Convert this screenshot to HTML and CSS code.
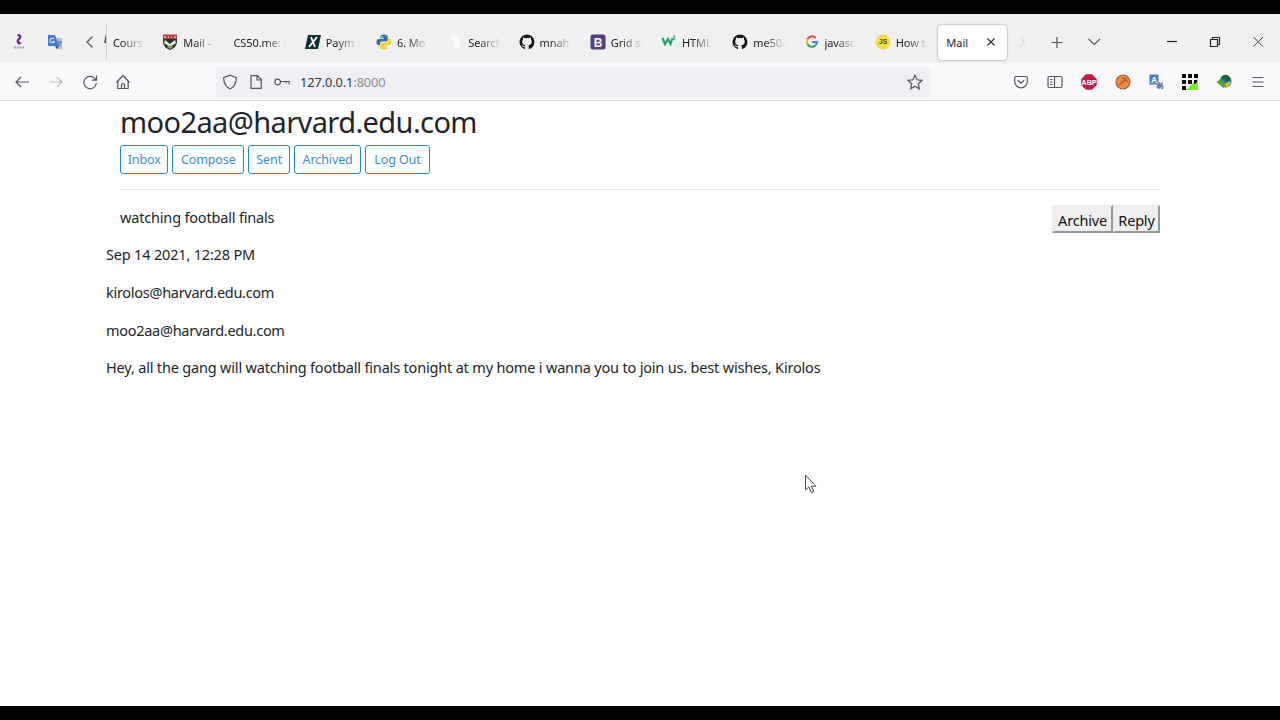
FILE: index.html
```html
<!DOCTYPE html>
<html lang="en">
<head>
  <meta charset="UTF-8" />
  <title>Mail</title>
  <link rel="stylesheet" href="styles.css">
</head>
<body>
  <div class="tabbar">
    <div class="pinned">
      <svg width="16" height="16" viewBox="0 0 16 16"><path d="M6.500 1.500c3-1 3.500 1.500 1.500 3.500-2 2-2 3.500 1 4" fill="none" stroke="#642b82" stroke-width="2.200"/><path d="M7 9.500q2 1 3-1" fill="none" stroke="#642b82" stroke-width="1.500"/><path d="M3 13.500h10" stroke="#aaa1b1" stroke-width="2" stroke-dasharray="2 .7"/></svg>
      <svg width="16" height="16" viewBox="0 0 16 16"><path d="M6 4h9v11H9z" fill="#b5c0d4"/><path d="M1 1h7l4 11H2q-1 0-1-1z" fill="#427bd4"/><path d="M8 12h4l-2 3z" fill="#3159b5"/><path d="M7 5a2.3 2.3 0 1 0 .3 2.500H5.500" fill="none" stroke="#e4efff" stroke-width="1.100"/><path d="M10 8h5M12 7v1M14 8q-1 3-3 4m0-3 3 3" stroke="#5b7297" fill="none"/></svg>
      <svg width="16" height="16" viewBox="0 0 16 16"><path d="M10.500 2.500 5 8l5.500 5.500" fill="none" stroke="#55555c" stroke-width="1.200"/></svg>
      <svg class="sliver" width="3" height="16" viewBox="0 0 3 16"><path d="M2.500 1 1 9" stroke="#333" stroke-width="1.500"/></svg>
    </div>
    <div class="tabs">
      <div class="tab first"><span class="title">Cours</span></div>
      <div class="tab">
        <svg width="16" height="16" viewBox="0 0 16 16"><path d="M1 1h14v7q0 5-7 8-7-3-7-8z" fill="#28382f"/><path d="M1 .5h14V5H1z" fill="#ad3d43"/><path d="M2 3h2m2 0h1m2 0h1m2 0h2" stroke="#ecc6af" stroke-width="1.500"/><path d="m3 6 5 4 5-4 1 3-6 4-6-4z" fill="#e9eee4"/><path d="m5 13 3-2 3 2-3 2z" fill="#7cac50"/></svg>
        <span class="title">Mail -</span>
      </div>
      <div class="tab"><span class="title">CS50.me: C</span></div>
      <div class="tab">
        <svg width="16" height="16" viewBox="0 0 16 16"><path d="M3 1h13l-3 14H0z" fill="#102d31"/><path d="m6 3 4 10M12 3l-8 10" stroke="#fff" stroke-width="1.900"/></svg>
        <span class="title">Paym</span>
      </div>
      <div class="tab">
        <svg width="16" height="16" viewBox="0 0 16 16"><path d="M8 .5c-3 0-3.700 1-3.700 2.300v1.500H8v.7H3C1 5 .5 6.500.5 8s.7 3.200 2 3.200H4V9.500C4 8 5 7.500 6 7.500h4c1.200 0 1.800-1 1.800-2V3C11.800 1.200 10 .5 8 .5z" fill="#3b719f"/><path d="M8 15.500c3 0 3.700-1 3.700-2.300v-1.500H8V11h5c2 0 2.500-1.500 2.500-3s-.7-3.200-2-3.200H12v1.700c0 1.500-1 2-2 2H6c-1.200 0-1.800 1-1.800 2V13c0 1.800 1.800 2.500 3.800 2.500z" fill="#f4d13f"/><circle cx="6" cy="2.700" r=".8" fill="#fff"/><circle cx="10" cy="13.300" r=".8" fill="#fff"/></svg>
        <span class="title">6. Mo</span>
      </div>
      <div class="tab">
        <svg width="16" height="16" viewBox="0 0 16 16"><path d="M4 1h7v3h2v10H7V6H4z" fill="#fbfaf5"/></svg>
        <span class="title">Search</span>
      </div>
      <div class="tab">
        <svg width="16" height="16" viewBox="0 0 16 16"><use href="#github"/></svg>
        <span class="title">mnah</span>
      </div>
      <div class="tab">
        <svg width="16" height="16" viewBox="0 0 16 16"><rect x=".5" y=".5" width="15" height="15" rx="2.500" fill="#563d7c"/><text class="mark bold" x="8" y="12.500" font-size="12">B</text></svg>
        <span class="title">Grid sy</span>
      </div>
      <div class="tab">
        <svg width="16" height="16" viewBox="0 0 16 16"><path d="m1.500 4 2.500 6L7 5l2.500 5 2-6" fill="none" stroke="#24a46d" stroke-width="2.200"/><path d="M12 2h2l-1.300 1.500Q15 4 13.500 5.500l-1.500-.3" fill="none" stroke="#24a46d"/></svg>
        <span class="title">HTML</span>
      </div>
      <div class="tab">
        <svg width="16" height="16" viewBox="0 0 16 16"><path id="github" d="M8 .5a7.500 7.500 0 0 0-2.400 14.600c.4.100.5-.1.500-.4v-1.500c-2.100.5-2.600-.9-2.600-.9-.3-.9-.8-1.100-.8-1.100-.7-.5 0-.5 0-.5.800.1 1.200.8 1.200.8.700 1.200 1.800.8 2.200.6 0-.5.300-.8.500-1-1.700-.2-3.400-.8-3.400-3.700 0-.8.300-1.500.8-2-.1-.2-.3-1 .1-2 0 0 .6-.2 2 .8a7 7 0 0 1 3.700 0c1.400-1 2-.8 2-.8.400 1 .2 1.800.1 2 .5.500.8 1.200.8 2 0 2.900-1.700 3.500-3.400 3.700.3.200.5.700.5 1.400v2.200c0 .2.100.5.500.4A7.500 7.500 0 0 0 8 .5z" fill="#171717"/></svg>
        <span class="title">me50/</span>
      </div>
      <div class="tab">
        <svg width="16" height="16" viewBox="0 0 16 16" fill="none" stroke-width="2"><path d="M3.500 5.200A5 5 0 0 1 11.700 4" stroke="#df4b3f"/><path d="M3.500 5.200a5 5 0 0 0 0 4.800" stroke="#eebb36"/><path d="M3.500 10a5 5 0 0 0 7.800 1.500" stroke="#34a65b"/><path d="M11.300 11.500Q13 10 13 7.900H8" stroke="#4285e9"/></svg>
        <span class="title">javasc</span>
      </div>
      <div class="tab">
        <svg width="16" height="16" viewBox="0 0 16 16"><circle cx="8" cy="8" r="7.500" fill="#f1dc4c"/><text class="mark dark" x="8" y="10.300" font-size="6.500">JS</text></svg>
        <span class="title">How t</span>
      </div>
    </div>
    <div class="tab active">
      <span>Mail</span>
      <svg width="10" height="10" viewBox="0 0 10 10"><path d="m1.500 1.500 7 7m0-7-7 7" stroke="#333" stroke-width="1.200"/></svg>
    </div>
    <div class="tab-tools">
      <svg width="16" height="16" viewBox="0 0 16 16"><path d="m5.500 4 4 4.500-4 4.500" fill="none" stroke="#dcdcdc" stroke-width="1.300"/></svg>
      <svg width="16" height="16" viewBox="0 0 16 16"><path d="M2.500 8.500h11M8 3v11" stroke="#505057" stroke-width="1.200"/></svg>
      <svg width="16" height="16" viewBox="0 0 16 16"><path d="m2.500 5 5.800 5.500L14 5" fill="none" stroke="#55555c" stroke-width="1.200"/></svg>
    </div>
    <div class="window-controls">
      <svg width="14" height="14" viewBox="0 0 14 14"><path d="M2 6.500h10" stroke="#222" stroke-width="1.200"/></svg>
      <svg width="14" height="14" viewBox="0 0 14 14"><path d="M2.500 4.500h7v7h-7zM4.500 4V2.500h7v7H10" fill="none" stroke="#222" stroke-width="1.200"/></svg>
      <svg width="14" height="14" viewBox="0 0 14 14"><path d="m2.500 2 9.500 9.500m0-9.500-9.500 9.500" stroke="#444"/></svg>
    </div>
  </div>

  <div class="toolbar">
    <div class="nav">
      <svg width="16" height="16" viewBox="0 0 16 16"><path d="M15 8H2m5-5L2 8l5 5"/></svg>
      <svg class="disabled" width="16" height="16" viewBox="0 0 16 16"><path d="M1.500 8H14M9 3l5 5-5 5"/></svg>
      <svg width="16" height="16" viewBox="0 0 16 16"><path d="M13.500 5.500A6.200 6.200 0 1 0 14.300 9M14.500 1.500v4.700H10"/></svg>
      <svg width="16" height="16" viewBox="0 0 16 16"><path d="m1.500 8.500 6.500-7 6.500 7M2.800 7.500v7h10.400v-7M6.500 14.500V11q0-1.500 1.500-1.500T9.500 11v3.500"/></svg>
    </div>
    <div class="urlbar">
      <svg width="16" height="16" viewBox="0 0 16 16"><path d="m8 1.200 6.300 2.500C14.300 9 12 13 8 14.800 4 13 1.700 9 1.700 3.700z"/></svg>
      <svg width="16" height="16" viewBox="0 0 16 16"><path d="M3 1.700h6.500l3.800 3.800v8.800H3zM9 2v4h4"/></svg>
      <svg width="16" height="16" viewBox="0 0 16 16"><circle cx="3.700" cy="8" r="2.800"/><path d="M6.700 7.500h8.500v2.700M12.200 7.500v2"/></svg>
      <span class="address">127.0.0.1<span class="port">:8000</span></span>
      <svg class="star" width="16" height="16" viewBox="0 0 16 16"><path d="m8 1.200 2 4.600 5 .5-3.700 3.400 1 5L8 12.200l-4.300 2.500 1-5L1 6.300l5-.5z"/></svg>
    </div>
    <div class="extensions">
      <svg width="16" height="16" viewBox="0 0 16 16"><path d="M3 2.500h10q1.300 0 1.300 1.300v3.700a6.300 6.300 0 0 1-12.600 0V3.800Q1.700 2.500 3 2.500zM4.800 6.300 8 9.300l3.200-3"/></svg>
      <svg width="16" height="16" viewBox="0 0 16 16"><rect x="1" y="2.500" width="14" height="11" rx="1.500"/><path d="M7.500 2.500v11M3 5.500h2.500M3 8h2.500M3 10.500h2.500"/></svg>
      <svg class="color" width="16" height="16" viewBox="0 0 16 16"><path d="M5 .3h6L15.700 5v6L11 15.700H5L.3 11V5z" fill="#c51a45"/><text class="mark bold" x="8" y="10.600" font-size="7">ABP</text></svg>
      <svg class="color" width="16" height="16" viewBox="0 0 16 16"><circle cx="8" cy="8" r="7" fill="#ec8b43" stroke="#995f3b"/><path d="m4 11 6-5M7 4q4 0 5 4" fill="none" stroke="#a35a2c" stroke-width="1.500"/></svg>
      <svg class="color" width="16" height="16" viewBox="0 0 16 16"><path d="M.5.500h9v10h-9z" fill="#4c7fbf"/><text class="mark bold" x="5" y="8.500" font-size="8.500">A</text><path d="M7 8h7v7H9z" fill="#c9d2df"/><path d="M7 10h7M10 8v6m3-3q-3 5-5 2 1-3 5-1 2 1 0 3" fill="none" stroke="#5e7392"/></svg>
      <svg class="color" width="16" height="16" viewBox="0 0 16 16"><path d="M16 4v12H4z" fill="#76ef24"/><path d="M0 0h4v4H0zM6 0h4v4H6zM12 0h4v4h-4zM0 6h4v4H0zM6 6h4v4H6zM0 12h4v4H0zM12 6h3v2l-2 2h-1z" fill="#0b0b0b"/></svg>
      <svg class="color" width="16" height="16" viewBox="0 0 16 16"><circle cx="9.500" cy="7.500" r="6" fill="#257c9e"/><path d="M5 3q4-4 8-1l2 4-4 2-3-3z" fill="#176b33"/><path d="m.5 8 4-3 3 3 3 2-3 4z" fill="#58a432"/><path d="m9 10 5-3 .5 3-4.500 4z" fill="#e0bd32"/></svg>
      <svg width="16" height="16" viewBox="0 0 16 16"><path d="M2.500 3.500h11M2.500 8h11M2.500 12.500h11"/></svg>
    </div>
  </div>

  <div class="page">
    <div class="container">
      <h2>moo2aa@harvard.edu.com</h2>
      <div class="menu">
        <button class="btn inbox">Inbox</button>
        <button class="btn compose">Compose</button>
        <button class="btn sent">Sent</button>
        <button class="btn archived">Archived</button>
        <button class="btn logout">Log Out</button>
      </div>
      <hr>
      <div class="subject">
        <p>watching football finals</p>
        <div class="actions"><button class="archive">Archive</button><button class="reply">Reply</button></div>
      </div>
      <div class="email">
        <p class="date">Sep 14 2021, 12:28 PM</p>
        <p class="address-line">kirolos@harvard.edu.com</p>
        <p class="address-line">moo2aa@harvard.edu.com</p>
        <p>Hey, all the gang will watching football finals tonight at my home i wanna you to join us. best wishes, Kirolos</p>
      </div>
    </div>
  </div>
  <svg class="cursor" width="14" height="20" viewBox="0 0 14 20"><path d="M1.500 1v15l3.300-3 2.500 5.500 2.500-1-2.500-5.300h4.500z" fill="#fff" stroke="#444"/></svg>
</body>
</html>
```

FILE: styles.css
```css
* {
  box-sizing: border-box;
}

body {
  margin: 0;
  height: 720px;
  border-top: 14px solid #000;
  border-bottom: 14px solid #000;
  background: #fff;
  color: #212529;
  font-family: 'Segoe UI', 'Noto Sans', sans-serif;
  overflow: hidden;
}

svg {
  display: block;
  flex-shrink: 0;
}

.tabbar {
  display: flex;
  align-items: center;
  height: 49px;
  padding-bottom: 3px;
  padding-top: 10px;
  background: #f0f0f0;
  font-size: 11px;
  color: #1c1c1f;
}

.pinned {
  display: flex;
  width: 106px;
  padding-left: 11px;
  gap: 20px;
}

.pinned svg:nth-child(3) {
  margin-left: -1px;
}

.pinned .sliver {
  margin-left: -14px;
}

.tabs {
  display: flex;
  width: 832.25px;
}

.tab {
  display: flex;
  align-items: center;
  width: 71.25px;
  height: 36px;
  padding-left: 8px;
  gap: 5px;
  flex-shrink: 0;
}

.tab.first {
  width: 48.25px;
  padding-left: 6px;
  border-left: 1px solid #cfcfd2;
}

.title {
  flex: 1;
  min-width: 0;
  overflow: hidden;
  white-space: nowrap;
  letter-spacing: -0.1px;
  mask-image: linear-gradient(to right, #000 calc(100% - 32px), transparent calc(100% - 10px));
}

.tab.active {
  justify-content: space-between;
  width: 69px;
  height: 35px;
  padding: 0 11px 0 8px;
  background: #fff;
  border-radius: 4px;
  box-shadow: 0 0 2px rgba(0, 0, 0, 0.5);
}

.tab-tools {
  display: flex;
  padding-left: 8px;
  gap: 20px;
}

.tab-tools svg:first-child {
  margin-right: -2px;
}

.tab-tools svg:last-child {
  margin-left: 1px;
}

.window-controls {
  display: flex;
  margin-left: auto;
  padding-right: 15px;
  gap: 29px;
}

.toolbar {
  display: flex;
  align-items: center;
  height: 38px;
  background: #f9f9fb;
  border-bottom: 1px solid #dcdcde;
}

.toolbar svg {
  fill: none;
  stroke: #55555d;
  stroke-width: 1.2;
}

.toolbar svg.color {
  stroke: none;
}

.toolbar svg.disabled {
  stroke: #bcbcc0;
}

.nav {
  display: flex;
  width: 216px;
  padding-left: 14px;
  gap: 17.8px;
}

.urlbar {
  display: flex;
  align-items: center;
  width: 714px;
  height: 30px;
  padding: 0 7px 0 6px;
  gap: 10px;
  background: #f0f0f4;
  border-radius: 3px;
}

.address {
  font-size: 12.8px;
  letter-spacing: -0.1px;
  color: #38383d;
}

.port {
  color: #8b8b92;
}

.star {
  margin-left: auto;
}

.extensions {
  display: flex;
  margin-left: auto;
  padding-right: 14px;
  gap: 17.8px;
}

.mark {
  fill: #fff;
  stroke: none;
  text-anchor: middle;
  font-family: 'Liberation Sans', sans-serif;
}

.mark.bold {
  font-weight: bold;
}

.mark.dark {
  fill: #423c19;
  font-weight: bold;
}

.container {
  width: 1040px;
  margin: 0 auto;
  padding-top: 3px;
}

h2 {
  margin: 0;
  height: 41px;
  font-size: 29px;
  font-weight: 400;
  line-height: 35px;
  letter-spacing: -0.6px;
}

.menu {
  display: flex;
  gap: 4.1px;
}

.btn {
  height: 29px;
  padding: 0;
  background: #fff;
  border: 1px solid #2587d0;
  border-radius: 3px;
  color: #3e8dd2;
  font-family: inherit;
  font-size: 12.6px;
  letter-spacing: -0.15px;
}

.inbox { width: 48.4px; }
.compose { width: 71.6px; }
.sent { width: 42px; }
.archived { width: 66.8px; }
.logout { width: 64.6px; }

hr {
  margin: 15px 0;
  border: 0;
  border-top: 1px solid #e3e3e3;
}

p {
  margin: 0 0 15px;
  font-size: 14.5px;
  line-height: 22.6px;
  letter-spacing: -0.18px;
  white-space: nowrap;
}

.address-line {
  letter-spacing: -0.29px;
}

.subject {
  display: flex;
  justify-content: space-between;
  height: 37.4px;
}

.subject p,
.email {
  padding-top: 1px;
}

.email {
  margin-left: -14px;
}

.actions {
  display: flex;
}

.actions button {
  height: 28px;
  padding: 1px 0 0;
  background: #efefef;
  border: 2px outset #ececec;
  font-family: inherit;
  font-size: 14.5px;
  letter-spacing: -0.2px;
  color: #111;
}

.archive { width: 61px; }
.reply { width: 47px; }

.cursor {
  position: absolute;
  left: 804px;
  top: 474px;
}
```
